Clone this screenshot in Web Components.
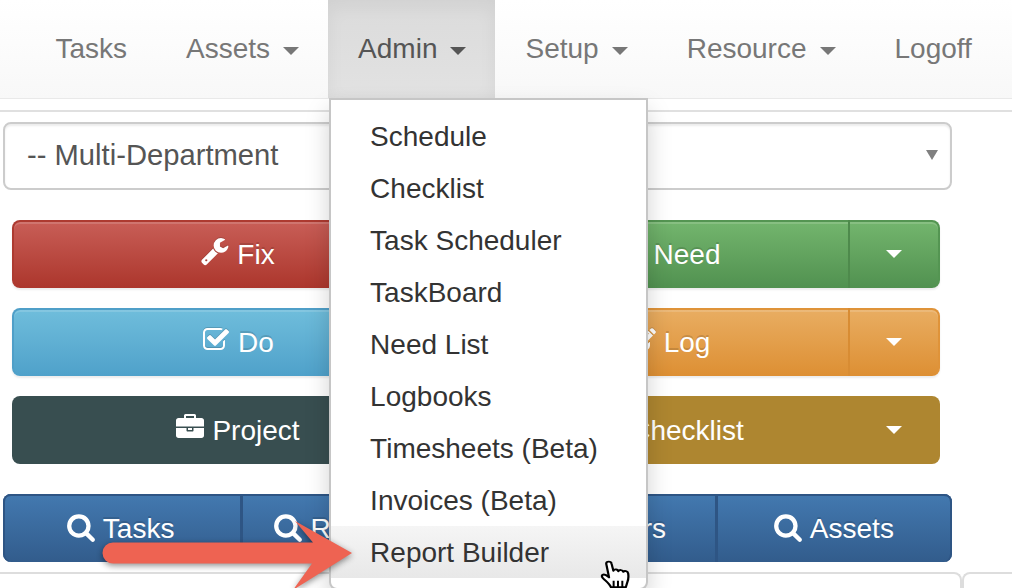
<!DOCTYPE html>
<html lang="en">
<head>
<meta charset="utf-8">
<title>Admin menu</title>
<style>
  html, body { margin: 0; height: 588px; overflow: hidden; background: #fff; }
  body { font-family: "Liberation Sans", Arial, sans-serif; font-size: 28px; color: #333; position: relative; }
  .page { display: block; padding: 0 60px 0 3px; }
</style>
</head>
<body>
<app-navbar>
  <nav-link>Tasks</nav-link>
  <nav-link caret>Assets</nav-link>
  <nav-link caret active>Admin
    <drop-menu slot="menu">
      <menu-item>Schedule</menu-item>
      <menu-item>Checklist</menu-item>
      <menu-item>Task Scheduler</menu-item>
      <menu-item>TaskBoard</menu-item>
      <menu-item>Need List</menu-item>
      <menu-item>Logbooks</menu-item>
      <menu-item>Timesheets (Beta)</menu-item>
      <menu-item>Invoices (Beta)</menu-item>
      <menu-item hover>Report Builder</menu-item>
    </drop-menu>
  </nav-link>
  <nav-link caret>Setup</nav-link>
  <nav-link caret>Resource</nav-link>
  <nav-link>Logoff</nav-link>
</app-navbar>
<div class="page">
  <dept-select>-- Multi-Department</dept-select>
  <action-grid>
    <action-button tone="danger" icon="wrench">Fix</action-button>
    <action-button tone="success" icon="cart" split>Need</action-button>
    <action-button tone="info" icon="check">Do</action-button>
    <action-button tone="warning" icon="pencil" split>Log</action-button>
    <action-button tone="slate" icon="briefcase">Project</action-button>
    <action-button tone="gold" icon="check" split>Checklist</action-button>
  </action-grid>
  <search-bar>
    <search-button>Tasks</search-button>
    <search-button>Resources</search-button>
    <search-button>Vendors</search-button>
    <search-button>Assets</search-button>
  </search-bar>
</div>
<tab-strip></tab-strip>
<pointer-arrow></pointer-arrow>
<hand-cursor></hand-cursor>

<script>
const ICONS = {
	wrench: "M384 1472q0-26-19-45t-45-19-45 19-19 45 19 45 45 19 45-19 19-45zm644-420l-682 682q-37 37-90 37-52 0-91-37l-106-108q-38-36-38-90 0-53 38-91l681-681q39 98 114.5 173.5t173.5 114.5zm634-435q0 39-23 106-47 134-164.5 217.5t-258.5 83.5q-185 0-316.5-131.5t-131.5-316.5 131.5-316.5 316.5-131.5q58 0 121.5 16.5t107.5 46.5q16 11 16 28t-16 28l-293 169v224l193 107q5-3 79-48.5t135.5-81 70.5-35.5q15 0 23.5 10t8.5 25z",
	check: "M1472 930v318q0 119-84.500 203.500t-203.500 84.500h-832q-119 0-203.500-84.500t-84.500-203.500v-832q0-119 84.500-203.500t203.500-84.500h832q63 0 117 25 15 7 18 23 3 17-9 29l-49 49q-10 10-23 10-3 0-9-2-23-6-45-6h-832q-66 0-113 47t-47 113v832q0 66 47 113t113 47h832q66 0 113-47t47-113v-254q0-13 9-22l64-64q10-10 23-10 6 0 12 3 20 8 20 29zm231-489l-814 814q-24 24-57 24t-57-24l-430-430q-24-24-24-57t24-57l110-110q24-24 57-24t57 24l263 263 647-647q24-24 57-24t57 24l110 110q24 24 24 57t-24 57z",
	briefcase: "M640 256h512v-128h-512v128zm1152 640v480q0 66-47 113t-113 47h-1472q-66 0-113-47t-47-113v-480h672v160q0 26 19 45t45 19h320q26 0 45-19t19-45v-160h672zm-768 0v128h-256v-128h256zm768-480v384h-1792v-384q0-66 47-113t113-47h352v-160q0-40 28-68t68-28h576q40 0 68 28t28 68v160h352q66 0 113 47t47 113z",
	pencil: "M888 1184l116-116-152-152-116 116v56h96v96h56zm440-720q-16-16-33 1l-350 350q-17 17-1 33t33-1l350-350q17-17 1-33zm80 594v190q0 119-84.500 203.500t-203.500 84.500h-832q-119 0-203.500-84.500t-84.500-203.500v-832q0-119 84.500-203.500t203.500-84.500h832q63 0 117 25 15 7 18 23 3 17-9 29l-49 49q-14 14-32 8-23-6-45-6h-832q-66 0-113 47t-47 113v832q0 66 47 113t113 47h832q66 0 113-47t47-113v-126q0-13 9-22l64-64q15-15 35-7t20 29zm-96-738l288 288-672 672h-288v-288zm444 132l-92 92-288-288 92-92q28-28 68-28t68 28l152 152q28 28 28 68t-28 68z",
	cart: "M704 1536q0 52-38 90t-90 38-90-38-38-90 38-90 90-38 90 38 38 90zm896 0q0 52-38 90t-90 38-90-38-38-90 38-90 90-38 90 38 38 90zm128-1088v512q0 24-16.500 42.500t-40.500 21.500l-1044 122q13 60 13 70 0 16-24 64h920v128h-1024q-26 0-45-19t-19-45q0-11 8-31.500t16-36 21.500-40 15.500-29.500l-177-823h-204v-128h256q16 0 28.500 6.500t19.500 15.500 13 24.500 8 26 5.500 29.500 4.500 26h1201q26 0 45 19t19 45z",
	search: "M1216 832q0-185-131.500-316.500t-316.500-131.500-316.500 131.500-131.500 316.500 131.500 316.500 316.500 131.500 316.500-131.500 131.500-316.500zm512 832q0 52-38 90t-90 38q-54 0-90-38l-343-342q-179 124-399 124-143 0-273.500-55.500t-225-150-150-225-55.500-273.500 55.500-273.500 150-225 225-150 273.500-55.500 273.500 55.500 225 150 150 225 55.500 273.500q0 220-124 399l343 343q37 37 37 90z",
};

const TONES = {
	danger: ["#c95f58", "#ac362c", "#ad3a30", "#a4352c"],
	info: ["#70bedc", "#4fa1ca", "#4f9fc8", "#4f9fc8"],
	success: ["#74b66e", "#519150", "#549552", "#4e8a4c"],
	warning: ["#e9ae63", "#dd8f33", "#df9339", "#d88c33"],
	slate: ["#384e50", "#384e50", "#384e50", "#384e50"],
	gold: ["#ae8630", "#ae8630", "#ae8630", "#ae8630"],
};

function iconSvg(name, size = 28) {
	return `<svg viewBox="0 0 1792 1792" width="${size}" height="${size}" fill="currentColor" aria-hidden="true"><path d="${ICONS[name]}"/></svg>`;
}

/* small helper so every element below only has to hand over its markup */
class ShadowEl extends HTMLElement {
	render(html) {
		if (!this.shadowRoot) this.attachShadow({ mode: "open" });
		this.shadowRoot.innerHTML = html;
	}
}

class AppNavbar extends ShadowEl {
	connectedCallback() {
		this.render(`<style>
			:host { display: block; padding-bottom: 11px; border-bottom: 2px solid #e0e0e0; }
			nav {
				display: flex; height: 98px; padding-left: 25.500px;
				background: linear-gradient(#fff, #f8f8f8);
				border-bottom: 1px solid #e9e9e9;
				box-shadow: inset 0 2px 0 rgba(255,255,255,.15);
			}
		</style><nav><slot></slot></nav>`);
	}
}

class NavLink extends ShadowEl {
	connectedCallback() {
		const caret = this.hasAttribute("caret") ? '<i class="caret"></i>' : "";
		this.render(`<style>
			:host { display: block; position: relative; font-size: 28px; color: #777; }
			:host([active]) { color: #555; }
			a { display: flex; align-items: center; height: 98px; padding: 0 29px 0 30px; box-sizing: border-box; }
			:host([active]) a {
				background: linear-gradient(#dbdbdb, #e2e2e2);
				box-shadow: inset 0 6px 18px rgba(0,0,0,.05);
			}
			.caret { margin-left: 13px; border-top: 8px solid currentColor; border-left: 8px solid transparent; border-right: 8px solid transparent; margin-top: 3px; }
		</style><a><slot></slot>${caret}</a><slot name="menu"></slot>`);
	}
}

class DropMenu extends ShadowEl {
	connectedCallback() {
		this.render(`<style>
			:host {
				display: block; position: absolute; z-index: 5; top: 98px; left: 1px;
				width: 319px; box-sizing: border-box; padding: 10px 0;
				background: #fff; color: #333; font-size: 28px;
				border: 2px solid #c6c6c6; border-radius: 0 0 8px 8px;
				box-shadow: 0 12px 24px rgba(0,0,0,.18);
			}
		</style><slot></slot>`);
	}
}

class MenuItem extends ShadowEl {
	connectedCallback() {
		this.render(`<style>
			:host { display: block; height: 52px; line-height: 54px; padding-left: 39px; white-space: nowrap; }
			:host([hover]) { background: linear-gradient(#f5f5f5, #e8e8e8); }
		</style><slot></slot>`);
	}
}

class DeptSelect extends ShadowEl {
	connectedCallback() {
		this.render(`<style>
			:host {
				display: flex; align-items: center; justify-content: space-between;
				height: 68px; box-sizing: border-box; margin-top: 10px; padding: 0 12px 0 22px;
				border: 2px solid #ccc; border-radius: 8px; color: #555; font-size: 29.2px;
				box-shadow: inset 0 2px 2px rgba(0,0,0,.075);
			}
			span { margin-top: -1px; }
			i { margin-top: -3px; border-top: 10px solid #808080; border-left: 6px solid transparent; border-right: 6px solid transparent; }
		</style><span><slot></slot></span><i></i>`);
	}
}

class ActionGrid extends ShadowEl {
	connectedCallback() {
		this.render(`<style>
			:host { display: grid; grid-template-columns: 452px 452px; column-gap: 24px; row-gap: 20px; padding: 30px 9px; }
		</style><slot></slot>`);
	}
}

class ActionButton extends ShadowEl {
	connectedCallback() {
		const [top, bottom, edge, rule] = TONES[this.getAttribute("tone")];
		const glossy = top !== bottom;
		const name = this.getAttribute("icon");
		const toggle = this.hasAttribute("split") ? '<span class="toggle"><i></i></span>' : "";
		this.render(`<style>
			:host {
				display: flex; height: 68px; box-sizing: border-box; color: #fff; font-size: 28px;
				background: linear-gradient(${top}, ${bottom});
				border-radius: 8px;
				border: 2px solid ${glossy ? edge : "transparent"}; border-bottom-color: transparent; background-origin: border-box;
				box-shadow: ${glossy ? "inset 0 2px 0 rgba(255,255,255,.15), 0 2px 2px rgba(0,0,0,.075)" : "none"};
				text-shadow: ${glossy ? "0 -2px 0 rgba(0,0,0,.15)" : "none"};
			}
			.main { flex: 1; display: flex; align-items: center; justify-content: center; gap: 8px; padding-top: 2px; }
			svg { flex: none; margin: ${name === "wrench" ? "-8px -.750px 0" : "-6px 0 0"}; filter: drop-shadow(0 -1px 0 rgba(0,0,0,${glossy ? ".15" : "0"})); }
			.toggle { width: 88px; margin-top: -2px; margin-bottom: -2px; display: flex; align-items: center; justify-content: center; border-left: 2px solid ${rule}; }
			.toggle i { border-top: 8px solid #fff; border-left: 8px solid transparent; border-right: 8px solid transparent; }
		</style><span class="main">${iconSvg(name, name === "wrench" ? 29.5 : 28)}<span><slot></slot></span></span>${toggle}`);
	}
}

class SearchBar extends ShadowEl {
	connectedCallback() {
		this.render(`<style>
			:host {
				display: grid; grid-template-columns: repeat(4, 1fr); height: 68px; overflow: hidden;
				border-radius: 8px; color: #fff;
				background: linear-gradient(#4379b0, #325c8c);
				box-shadow: inset 0 2px 0 #2e5584, inset 2px 0 0 #2e5584, inset -2px 0 0 #2e5584;
			}
		</style><slot></slot>`);
	}
}

class SearchButton extends ShadowEl {
	connectedCallback() {
		this.render(`<style>
			:host {
				display: flex; align-items: center; justify-content: center; gap: 7px; padding: 2px 3px 0 0;
				font-size: 28px; text-shadow: 0 -2px 0 rgba(0,0,0,.15); border-left: 3px solid #2e5584; box-sizing: border-box;
			}
			:host(:first-child) { border-left: 0; }
			svg { margin-top: -5px; }
		</style>${iconSvg("search", 30)}<span><slot></slot></span>`);
	}
}

class TabStrip extends ShadowEl {
	connectedCallback() {
		this.render(`<style>
			:host { display: flex; margin-top: 10px; height: 30px; }
			div { border-top: 2px solid #ddd; box-sizing: border-box; }
			.a { width: 962px; border-right: 2px solid #ddd; border-top-right-radius: 8px; }
			.b { flex: 1; border-left: 2px solid #ddd; border-top-left-radius: 8px; }
		</style><div class="a"></div><div class="b"></div>`);
	}
}

/* annotation drawn on top of the screenshot */
class PointerArrow extends ShadowEl {
	connectedCallback() {
		this.render(`<style>
			:host { position: absolute; z-index: 8; left: 95px; top: 515px; line-height: 0; }
		</style><svg width="270" height="73" viewBox="95 515 270 73" style="overflow:hidden;filter:drop-shadow(0 2px 3px rgba(0,0,0,.45))">
			<path fill="#ee6352" d="M113 542.500H313L295 521 352 553 293 590 312 563.500H113a10.500 10.500 0 0 1 0-21z"/>
		</svg>`);
	}
}

class HandCursor extends ShadowEl {
	connectedCallback() {
		this.render(`<style>
			:host { position: absolute; z-index: 9; left: 600px; top: 560px; line-height: 0; }
		</style><svg width="31" height="29" viewBox="1 0 25 28" preserveAspectRatio="none">
			<path fill="#fff" stroke="#000" stroke-width="1.800" stroke-linejoin="round" d="M6 3.500c0-2.600 4-2.600 4.300 0l1.500 7c.4-2 3.700-1.800 4 .4.600-1.800 3.600-1.500 3.900.6.900-1.500 3.700-.9 4 1.300.4 3 .2 6-.6 8.500l-1.300 5H9.800c-1-3-3-4.800-5.500-7.600C2.700 17 2 15.500 3 14.500c1.100-1 3-.2 5.300 2.300L6 3.500z"/>
			<path stroke="#000" stroke-width="1.600" d="M12 20v6M15.500 20v6M19 20v6"/>
		</svg>`);
	}
}

customElements.define("app-navbar", AppNavbar);
customElements.define("nav-link", NavLink);
customElements.define("drop-menu", DropMenu);
customElements.define("menu-item", MenuItem);
customElements.define("dept-select", DeptSelect);
customElements.define("action-grid", ActionGrid);
customElements.define("action-button", ActionButton);
customElements.define("search-bar", SearchBar);
customElements.define("search-button", SearchButton);
customElements.define("tab-strip", TabStrip);
customElements.define("pointer-arrow", PointerArrow);
customElements.define("hand-cursor", HandCursor);
</script>
</body>
</html>
